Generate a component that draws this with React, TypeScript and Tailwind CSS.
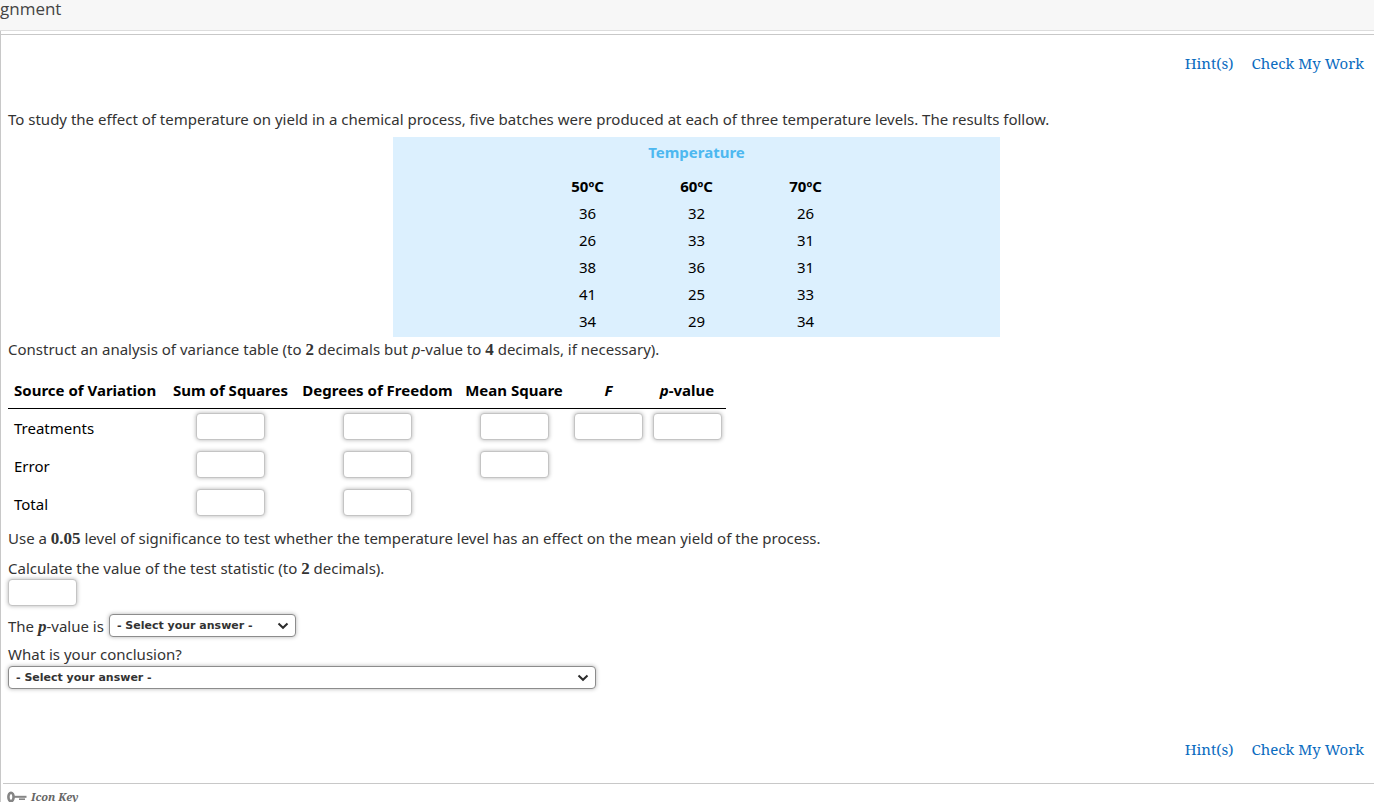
import React from "react";

const readings = [
  [36, 32, 26],
  [26, 33, 31],
  [38, 36, 31],
  [41, 25, 33],
  [34, 29, 34],
];

const columns = ["Sum of Squares", "Degrees of Freedom", "Mean Square", "F", "p-value"];

const sources = [
  { name: "Treatments", cells: 5 },
  { name: "Error", cells: 3 },
  { name: "Total", cells: 2 },
];

function AnswerBox({ label }: { label: string }) {
  return (
    <input
      type="text"
      aria-label={label}
      className="block h-[27px] w-[69px] rounded border border-[#c4c4c4] bg-white px-1 text-sm shadow-[0_0_4px_rgba(0,0,0,0.3)]"
    />
  );
}

function Num({ children }: { children: React.ReactNode }) {
  return <b className="font-['Liberation_Serif',serif] text-[17px] leading-4">{children}</b>;
}

function AnswerSelect({ id, className, options }: { id: string; className: string; options: string[] }) {
  return (
    <span className={`relative block ${className}`}>
      <select
        id={id}
        className="block h-[23px] w-full appearance-none rounded border border-[#8c8c8c] bg-white pt-px pr-7 pl-[7px] font-['DejaVu_Sans',Verdana,sans-serif] text-[11px] font-bold text-[#333333] shadow-[0_0_4px_rgba(0,0,0,0.3)]"
      >
        <option>- Select your answer -</option>
        {options.map((option) => (
          <option key={option}>{option}</option>
        ))}
      </select>
      <svg
        viewBox="0 0 12 8"
        className="pointer-events-none absolute top-2 right-[7px] h-2 w-3"
        fill="none"
        stroke="#2b2b2b"
        strokeWidth="2"
      >
        <path d="M1.5 1.5 6 5.8l4.5-4.3" />
      </svg>
    </span>
  );
}

function WorkLinks() {
  return (
    <nav className="flex justify-end gap-[18px] pr-[10px] font-['Noto_Serif','DejaVu_Serif_Condensed','Liberation_Serif',serif] text-[15px] leading-6 text-[#0b6cbf]">
      <a href="#hints">Hint(s)</a>
      <a href="#check">Check My Work</a>
    </nav>
  );
}

export default function App() {
  return (
    <div className="flex min-h-screen flex-col bg-white font-['Noto_Sans',Verdana,sans-serif] text-[15px] leading-5 text-[#333333]">
      <header className="h-[31px] shrink-0 border-b border-[#dddddd] bg-[#f7f7f7]">
        <h1 className="font-['Open_Sans',sans-serif] text-[17px] leading-[18px] text-[#444444]">gnment</h1>
      </header>
      <main className="grow border-l border-[#c8c8c8] pt-[3px]">
        <div className="border-t border-[#c8c8c8] pt-4">
          <WorkLinks />
        </div>

        <section className="pt-[34px] pl-[7px]">
          <p>
            To study the effect of temperature on yield in a chemical process, five batches were produced at each of
            three temperature levels. The results follow.
          </p>

          <div className="mt-2 ml-[11px]">
            <div className="mx-auto flex h-[200px] w-[607px] max-w-full justify-center bg-[#dcf0fe] text-black">
              <table className="table-fixed border-collapse self-start text-center">
                <caption className="h-[35px] pt-[5px] font-bold text-[#4db8f0]">Temperature</caption>
                <thead>
                  <tr className="h-[27px]">
                    {["50", "60", "70"].map((t) => (
                      <th key={t} className="w-[109px] p-0 font-bold">{t}ºC</th>
                    ))}
                  </tr>
                </thead>
                <tbody>
                  {readings.map((row, r) => (
                    <tr key={r} className="h-[27px]">
                      {row.map((value, c) => (
                        <td key={c} className="p-0">{value}</td>
                      ))}
                    </tr>
                  ))}
                </tbody>
              </table>
            </div>
          </div>

          <p className="mt-[2px]">
            Construct an analysis of variance table (to <Num>2</Num> decimals but <i>p</i>-value to <Num>4</Num>{" "}
            decimals, if necessary).
          </p>

          <table className="mt-[13px] w-[718px] table-fixed border-collapse text-black">
            <colgroup>
              <col className="w-[157px]" />
              <col className="w-[131px]" />
              <col className="w-[163px]" />
              <col className="w-[110px]" />
              <col className="w-[79px]" />
              <col className="w-[78px]" />
            </colgroup>
            <thead>
              <tr className="h-[36px] border-b border-black whitespace-nowrap">
                <th className="p-0 pl-1.5 text-left">Source of Variation</th>
                <th className="p-0">Sum of Squares</th>
                <th className="p-0">Degrees of Freedom</th>
                <th className="p-0">Mean Square</th>
                <th className="p-0 italic">F</th>
                <th className="p-0"><i>p</i>-value</th>
              </tr>
            </thead>
            <tbody>
              {sources.map((source) => (
                <tr key={source.name} className="h-[38px]">
                  <th scope="row" className="p-0 pt-0.5 pl-1.5 text-left font-normal">{source.name}</th>
                  {columns.map((column, c) => (
                    <td key={column} className="p-0 pb-0.5">
                      <div className="flex justify-center">
                        {c < source.cells && <AnswerBox label={`${source.name}, ${column}`} />}
                      </div>
                    </td>
                  ))}
                </tr>
              ))}
            </tbody>
          </table>

          <p className="mt-[6px]">
            Use a <Num>0.05</Num> level of significance to test whether the temperature level has an effect on the mean
            yield of the process.
          </p>
          <p className="mt-[10px] mb-px">
            Calculate the value of the test statistic (to <Num>2</Num> decimals).
          </p>
          <AnswerBox label="Value of the test statistic" />
          <div className="mt-2 flex items-center gap-[5px]">
            <label htmlFor="p-value">
              The <b className="font-['Liberation_Serif',serif] text-[17px] leading-4 italic">p</b>-value is
            </label>
            <AnswerSelect
              id="p-value"
              className="w-[187px]"
              options={["less than .01", "between .01 and .025", "between .025 and .05", "greater than .10"]}
            />
          </div>
          <label htmlFor="conclusion" className="mt-[7px] mb-[2px] block">What is your conclusion?</label>
          <AnswerSelect
            id="conclusion"
            className="w-[588px] max-w-full"
            options={["Conclude that the mean yields are not all equal", "Do not reject the null hypothesis"]}
          />
        </section>

        <div className="pt-12">
          <WorkLinks />
        </div>

        <footer className="mt-[22px] ml-[2px] flex items-center gap-1 border-t border-[#c8c8c8] pt-[5px] pl-1 font-['Noto_Serif','DejaVu_Serif_Condensed','Liberation_Serif',serif] text-[11px] leading-4 font-bold text-[#666666] italic">
          <svg viewBox="0 0 20 12" className="h-3 w-5" fill="none" stroke="#858585">
            <ellipse cx="4" cy="6" rx="2.6" ry="4.2" strokeWidth="2.6" />
            <path d="M7 5.8h12.5" strokeWidth="2" />
            <path d="M12 8.2h6" strokeWidth="1.6" />
          </svg>
          Icon Key
        </footer>
      </main>
    </div>
  );
}
